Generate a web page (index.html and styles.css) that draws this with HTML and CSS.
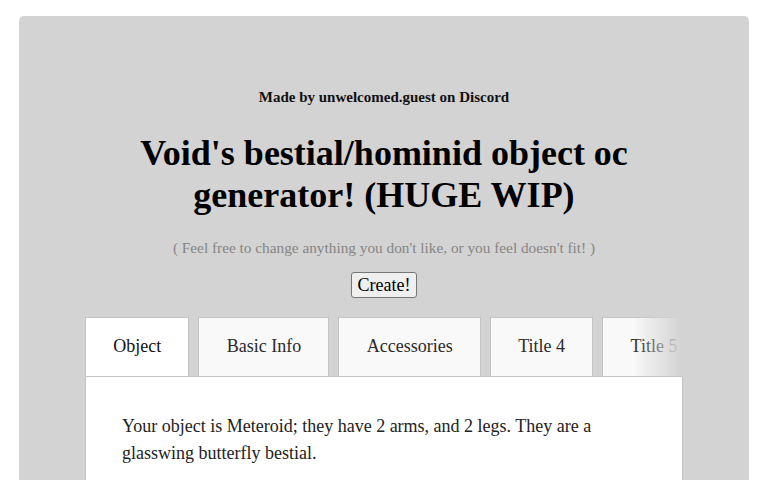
FILE: index.html
```html
<!DOCTYPE html>
<html lang="en">
<head>
<meta charset="utf-8">
<title>Void's bestial/hominid object oc generator</title>
<link rel="stylesheet" href="styles.css">
</head>
<body>
<main class="card">
  <p class="credit">Made by unwelcomed.guest on Discord</p>
  <h1 class="title">Void's bestial/hominid object oc generator! (HUGE WIP)</h1>
  <p class="note">( Feel free to change anything you don't like, or you feel doesn't fit! )</p>
  <div class="actions"><button class="create" type="button">Create!</button></div>
  <section class="tabs">
    <div class="tab-strip">
      <div class="tab-row">
        <div class="tab active">Object</div>
        <div class="tab">Basic Info</div>
        <div class="tab">Accessories</div>
        <div class="tab">Title 4</div>
        <div class="tab">Title 5</div>
      </div>
      <div class="fade"></div>
    </div>
    <div class="panel">
      <p class="result">Your object is Meteroid; they have 2 arms, and 2 legs. They are a glasswing butterfly bestial.</p>
    </div>
  </section>
</main>
</body>
</html>
```
FILE: styles.css
```css
html, body {
  margin: 0;
  padding: 0;
  background: #ffffff;
}
body {
  padding: 16px 19px;
  font-family: "Liberation Serif", "Times New Roman", serif;
  color: #111;
}
.card {
  background: #d3d3d3;
  border-radius: 5px;
  padding: 73px 0 40px;
  min-height: 500px;
  box-sizing: border-box;
}
.credit {
  margin: 0;
  text-align: center;
  font-size: 15px;
  font-weight: bold;
  line-height: 17px;
  color: #111;
}
.title {
  margin: 26px auto 0;
  max-width: 560px;
  text-align: center;
  font-size: 36px;
  line-height: 42px;
  font-weight: bold;
  color: #000;
}
.note {
  margin: 23px 0 0;
  text-align: center;
  font-size: 15.3px;
  line-height: 17px;
  color: #858585;
}
.actions {
  margin-top: 16px;
  display: flex;
  justify-content: center;
}
.create {
  font-family: "Liberation Serif", "Times New Roman", serif;
  font-size: 18px;
  line-height: 22px;
  padding: 1px 6px;
  border: 1px solid #767676;
  border-radius: 3px;
  background: #efefef;
  color: #000;
}
.tabs {
  width: 598px;
  margin: 19px auto 0;
}
.tab-strip {
  position: relative;
  overflow: hidden;
}
.tab-row {
  display: flex;
  gap: 9px;
  align-items: flex-end;
}
.tab {
  flex: none;
  height: 58px;
  line-height: 57px;
  padding: 0 27.25px;
  border: 1px solid #c4c4c4;
  border-bottom: none;
  background: #f9f9f9;
  font-size: 18px;
  color: #2a2a2a;
  white-space: nowrap;
}
.tab.active {
  background: #ffffff;
  height: 59px;
  margin-bottom: -1px;
  position: relative;
  z-index: 1;
  color: #111;
}
.fade {
  position: absolute;
  top: 0;
  right: 0;
  bottom: 0;
  width: 50px;
  z-index: 2;
  background: linear-gradient(to right, rgba(211, 211, 211, 0), #d3d3d3 96%);
}
.panel {
  background: #ffffff;
  border: 1px solid #c4c4c4;
  padding: 36px 36px 40px;
}
.result {
  margin: 0;
  font-size: 18px;
  line-height: 27px;
  color: #222;
}
```
